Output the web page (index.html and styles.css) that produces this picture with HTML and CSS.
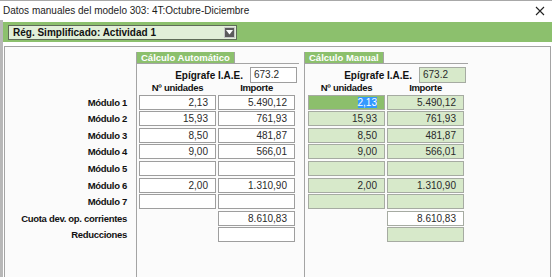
FILE: index.html
```html
<!DOCTYPE html>
<html lang="es">

<head>
    <meta charset="UTF-8">
    <meta name="viewport" content="width=device-width, initial-scale=1.0">
    <title>Datos manuales del modelo 303</title>
    <link rel="stylesheet" href="styles.css">
</head>

<body>
    <div class="window">
        <div class="titlebar">
            <span class="title">Datos manuales del modelo 303: 4T:Octubre-Diciembre</span>
            <svg class="close" width="10" height="10" viewBox="0 0 10 10">
                <path d="M1 1 L9 9 M9 1 L1 9" stroke="#222" stroke-width="1.1" fill="none" />
            </svg>
        </div>
        <div class="frame">
            <div class="toolbar">
                <div class="combo">
                    <span class="combo-text">Rég. Simplificado: Actividad 1</span>
                    <span class="combo-btn">
                        <svg width="7" height="5" viewBox="0 0 7 5">
                            <path d="M0 0 H7 L3.5 4.5 Z" fill="#fff" />
                        </svg>
                    </span>
                </div>
            </div>

            <div class="panel">
                <div class="labels">
                    <div class="label">Módulo 1</div>
                    <div class="label">Módulo 2</div>
                    <div class="label">Módulo 3</div>
                    <div class="label">Módulo 4</div>
                    <div class="label">Módulo 5</div>
                    <div class="label">Módulo 6</div>
                    <div class="label">Módulo 7</div>
                    <div class="label">Cuota dev. op. corrientes</div>
                    <div class="label">Reducciones</div>
                </div>

                <div class="group">
                    <div class="tab">Cálculo Automático</div>
                    <div class="group-body">
                        <div class="iae">
                            <span class="iae-label">Epígrafe I.A.E.</span>
                            <span class="field iae-field">673.2</span>
                        </div>
                        <div class="grid">
                            <div class="head">Nº unidades</div>
                            <div class="head">Importe</div>
                            <div class="field">2,13</div>
                            <div class="field">5.490,12</div>
                            <div class="field">15,93</div>
                            <div class="field">761,93</div>
                            <div class="field">8,50</div>
                            <div class="field">481,87</div>
                            <div class="field">9,00</div>
                            <div class="field">566,01</div>
                            <div class="field"></div>
                            <div class="field"></div>
                            <div class="field">2,00</div>
                            <div class="field">1.310,90</div>
                            <div class="field"></div>
                            <div class="field"></div>
                            <div class="blank"></div>
                            <div class="field">8.610,83</div>
                            <div class="blank"></div>
                            <div class="field"></div>
                        </div>
                    </div>
                </div>

                <div class="group manual">
                    <div class="tab">Cálculo Manual</div>
                    <div class="group-body">
                        <div class="iae">
                            <span class="iae-label">Epígrafe I.A.E.</span>
                            <span class="field iae-field">673.2</span>
                        </div>
                        <div class="grid">
                            <div class="head">Nº unidades</div>
                            <div class="head">Importe</div>
                            <div class="field focused"><span class="selected">2,13</span></div>
                            <div class="field">5.490,12</div>
                            <div class="field">15,93</div>
                            <div class="field">761,93</div>
                            <div class="field">8,50</div>
                            <div class="field">481,87</div>
                            <div class="field">9,00</div>
                            <div class="field">566,01</div>
                            <div class="field"></div>
                            <div class="field"></div>
                            <div class="field">2,00</div>
                            <div class="field">1.310,90</div>
                            <div class="field"></div>
                            <div class="field"></div>
                            <div class="blank"></div>
                            <div class="field readonly">8.610,83</div>
                            <div class="blank"></div>
                            <div class="field"></div>
                        </div>
                    </div>
                </div>
            </div>
        </div>
    </div>
</body>

</html>
```

FILE: styles.css
```css
body {
    margin: 0;
    font-family: "Liberation Sans", Arial, sans-serif;
    color: #1a1a1a;
    background: #ffffff;
}

.window {
    width: 552px;
    height: 277px;
    overflow: hidden;
    background: #ffffff;
    border-top: 1px solid #a8a8a8;
    box-sizing: border-box;
}

.titlebar {
    height: 19px;
    display: flex;
    align-items: center;
    justify-content: space-between;
    padding: 0 7px 0 3px;
}

.title {
    font-size: 10px;
    color: #1c1c1c;
}

.frame {
    border-left: 3px solid #b8b8b8;
    padding-top: 2px;
}

.toolbar {
    height: 20px;
    background-color: #8cc06d;
    padding: 3px 0 0 5px;
    box-sizing: border-box;
}

.combo {
    width: 229px;
    height: 15px;
    box-sizing: border-box;
    border: 1px solid #5f6b58;
    background-color: #e1efd8;
    display: flex;
    align-items: center;
    justify-content: space-between;
    padding-left: 4px;
}

.combo-text {
    font-size: 10px;
    font-weight: bold;
    color: #111;
}

.combo-btn {
    width: 11px;
    height: 11px;
    margin-right: 1px;
    box-sizing: border-box;
    background-color: #5b5b5b;
    border: 1px solid #c8c8c8;
    display: flex;
    align-items: center;
    justify-content: center;
}

.panel {
    margin: 4px 0 0 1px;
    height: 240px;
    border: 1px solid #a4a4a4;
    background-color: #fbfbfb;
    display: flex;
    padding-top: 5px;
    box-sizing: border-box;
    width: 547px;
}

.labels {
    width: 122px;
    padding-top: 42.6px;
    display: grid;
    grid-auto-rows: 15px;
    row-gap: 1.6px;
    align-content: start;
}

.label {
    font-size: 9.5px;
    font-weight: bold;
    letter-spacing: -0.3px;
    text-align: right;
    line-height: 15px;
    color: #111;
    white-space: nowrap;
}

.group {
    margin-left: 9px;
    width: 162px;
    border-left: 1px solid #a4a4a4;
    display: flex;
    flex-direction: column;
    align-items: flex-start;
}

.group.manual {
    margin-left: 5px;
    width: 163px;
}

.tab {
    height: 11px;
    line-height: 11px;
    padding: 0 4px;
    background-color: #8cc06d;
    border-right: 1px solid #a4a4a4;
    color: #ffffff;
    font-size: 9.5px;
    font-weight: bold;
    white-space: nowrap;
}

.group-body {
    align-self: stretch;
    border-top: 1px solid #a4a4a4;
    padding: 3px 0 0 2px;
}

.iae {
    display: flex;
    align-items: center;
    justify-content: flex-end;
    gap: 7px;
    width: 158px;
}

.iae-label {
    font-size: 10px;
    font-weight: bold;
    color: #111;
}

.field {
    box-sizing: border-box;
    border: 1px solid #9e9e9e;
    background-color: #ffffff;
    font-size: 10px;
    line-height: 13px;
    text-align: right;
    padding-right: 7px;
    color: #2a2a2a;
}

.iae-field {
    width: 47px;
    height: 16px;
    text-align: left;
    padding-left: 3px;
}

.grid {
    display: grid;
    grid-template-columns: 77px 77px;
    grid-template-rows: 10px;
    grid-auto-rows: 15px;
    column-gap: 2px;
    row-gap: 1.6px;
}

.head {
    font-size: 9.5px;
    font-weight: bold;
    letter-spacing: -0.3px;
    line-height: 10px;
    text-align: center;
    color: #111;
}

.manual .group-body {
    padding-left: 3px;
}

.manual .field {
    background-color: #d7e9ca;
    border-color: #a6aba2;
}

.manual .field.focused {
    background-color: #8cbf6c;
}

.manual .field.readonly {
    background-color: #ffffff;
}

.selected {
    background-color: #3399ff;
    color: #ffffff;
}
```
